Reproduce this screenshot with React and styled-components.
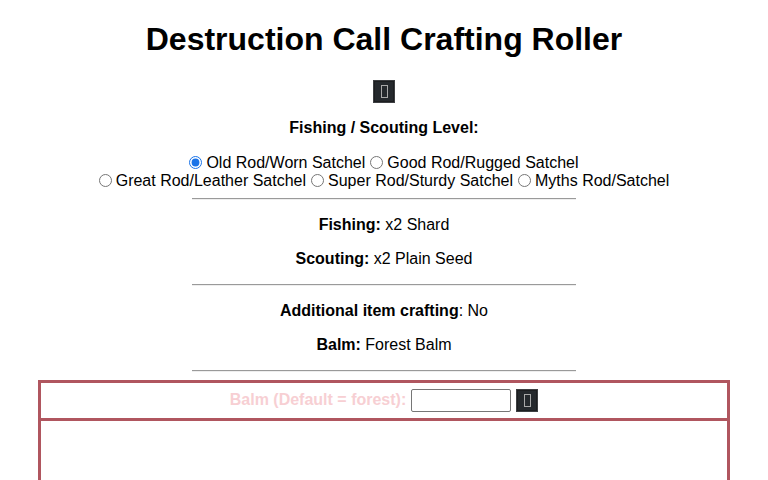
import React, { useState } from "react";
import styled, { createGlobalStyle } from "styled-components";

const GlobalStyle = createGlobalStyle`
  body {
    margin: 0;
    background: #ffffff;
    color: #000000;
    font-family: "Liberation Sans", Arial, sans-serif;
    font-size: 16px;
  }
`;

const levels = [
  "Old Rod/Worn Satchel",
  "Good Rod/Rugged Satchel",
  "Great Rod/Leather Satchel",
  "Super Rod/Sturdy Satchel",
  "Myths Rod/Satchel",
];

const App = () => {
  const [level, setLevel] = useState(0);

  return (
    <Page>
      <GlobalStyle />
      <Title>Destruction Call Crafting Roller</Title>
      <IconButton type="button" aria-label="roll">
        <Glyph />
      </IconButton>
      <Text>
        <b>Fishing / Scouting Level:</b>
      </Text>
      <RadioGroup>
        {levels.map((name, i) => (
          <React.Fragment key={name}>
            <RadioLabel $lineStart={i === 0 || i === 2}>
              <input
                type="radio"
                name="level"
                checked={level === i}
                onChange={() => setLevel(i)}
              />
              {name}
            </RadioLabel>
            {i === 1 && <br />}
          </React.Fragment>
        ))}
      </RadioGroup>
      <Rule />
      <Text>
        <b>Fishing:</b> x2 Shard
      </Text>
      <Text>
        <b>Scouting:</b> x2 Plain Seed
      </Text>
      <Rule />
      <Text>
        <b>Additional item crafting</b>: No
      </Text>
      <Text>
        <b>Balm:</b> Forest Balm
      </Text>
      <Rule />
      <Panel>
        <PanelRow>
          <PanelLabel htmlFor="balm">Balm (Default = forest):</PanelLabel>
          <BalmInput id="balm" type="text" />
          <IconButton type="button" aria-label="set balm">
            <Glyph />
          </IconButton>
        </PanelRow>
        <PanelBody />
      </Panel>
    </Page>
  );
};

export default App;

const Page = styled.div`
  text-align: center;
`;

const Title = styled.h1`
  font-size: 32px;
  margin: 21.44px 0;
`;

const IconButton = styled.button`
  display: inline-flex;
  align-items: center;
  justify-content: center;
  width: 22px;
  height: 23px;
  padding: 0;
  vertical-align: middle;
  background: #25292d;
  border: 1px solid #3d3f42;
  box-shadow: inset 0 0 0 1px #1c1e20;
  cursor: pointer;
`;

const Glyph = styled.span`
  display: block;
  width: 5px;
  height: 11px;
  border: 1px solid #a8a8a8;
`;

const Text = styled.p`
  margin: 16px 0;
  line-height: 18px;
`;

const RadioGroup = styled.p`
  margin: 17px 0 0;
  line-height: 18px;
`;

const RadioLabel = styled.label`
  input {
    width: 13px;
    height: 13px;
    margin: 0 4px 0 ${({ $lineStart }) => ($lineStart ? "0" : "5px")};
    vertical-align: -1px;
    accent-color: #1a73e8;
  }
`;

const Rule = styled.hr`
  width: 50%;
  margin: 8px auto;
  border: none;
  border-top: 1px solid #9a9a9a;
  border-bottom: 1px solid #eeeeee;
`;

const Panel = styled.div`
  width: 90%;
  margin: 8px auto 0;
  border: 3px solid #b0565f;
  box-sizing: border-box;
`;

const PanelRow = styled.div`
  display: flex;
  align-items: center;
  justify-content: center;
  gap: 5px;
  height: 35px;
  border-bottom: 3px solid #b0565f;
`;

const PanelLabel = styled.label`
  font-weight: bold;
  color: #f7cfd3;
`;

const BalmInput = styled.input`
  width: 100px;
  height: 23px;
  box-sizing: border-box;
  border: 1px solid #767676;
  border-radius: 2px;
  padding: 1px 2px;
  font-family: "Liberation Sans", Arial, sans-serif;
`;

const PanelBody = styled.div`
  height: 200px;
`;
